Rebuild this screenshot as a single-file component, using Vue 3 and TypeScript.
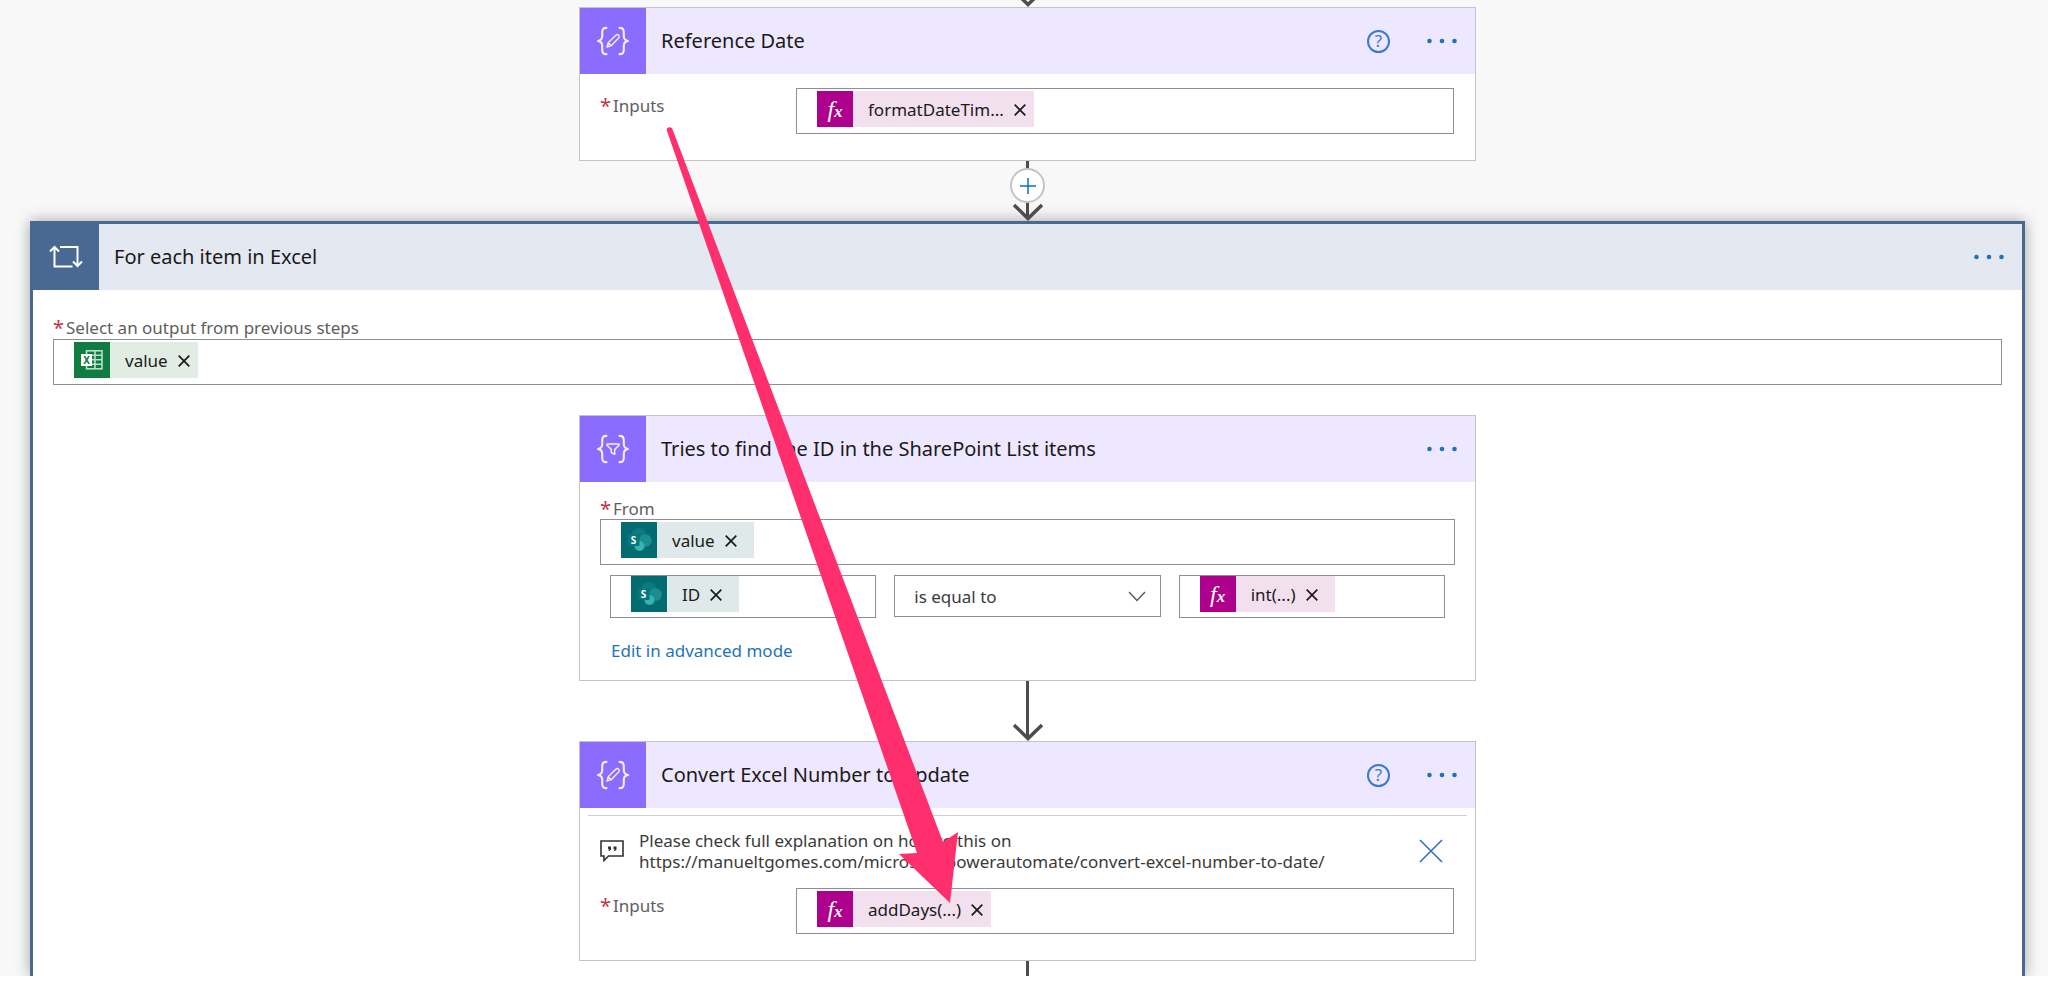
<script setup lang="ts">
import { ref } from 'vue'

type Source = 'fx' | 'excel' | 'sharepoint'

interface Token {
  source: Source
  text: string
}

const referenceInputs = ref<Token[]>([{ source: 'fx', text: 'formatDateTim...' }])
const loopSource = ref<Token[]>([{ source: 'excel', text: 'value' }])
const filterFrom = ref<Token[]>([{ source: 'sharepoint', text: 'value' }])
const filterLeft = ref<Token[]>([{ source: 'sharepoint', text: 'ID' }])
const filterRight = ref<Token[]>([{ source: 'fx', text: 'int(...)' }])
const convertInputs = ref<Token[]>([{ source: 'fx', text: 'addDays(...)' }])
const operator = ref('is equal to')
const commentOpen = ref(true)

function removeToken(list: Token[], index: number) {
  list.splice(index, 1)
}
</script>

<template>
  <svg class="defs" aria-hidden="true">
    <symbol id="braces" viewBox="0 0 36 32">
      <g fill="none" stroke="currentColor" stroke-width="2.200" stroke-linecap="round" stroke-linejoin="round">
        <path d="M11 2C7.500 2 6.500 3.500 6.500 6.500v4.500c0 3-1.500 4.500-4.500 5 3 .5 4.500 2 4.500 5v4.500c0 3 1 4.500 4.500 4.500" />
        <path d="M25 2c3.500 0 4.500 1.500 4.500 4.500v4.500c0 3 1.500 4.500 4.500 5-3 .5-4.500 2-4.500 5v4.500c0 3-1 4.500-4.500 4.500" />
      </g>
    </symbol>
    <symbol id="pencil" viewBox="0 0 16 16">
      <path d="M2 14l1.200-4.200L10.800 2.200a1.800 1.800 0 0 1 2.800 2.800L6.200 12.700zM3.200 9.800l3 2.900" fill="none" stroke="currentColor" stroke-width="1.400" stroke-linejoin="round" />
    </symbol>
    <symbol id="funnel" viewBox="0 0 16 16">
      <path d="M2 3h12v1.200L9.700 8.500v4.800l-3.400-1.800V8.500L2 4.200z" fill="none" stroke="currentColor" stroke-width="1.500" stroke-linejoin="round" />
    </symbol>
    <symbol id="cross" viewBox="0 0 12 12">
      <path d="M.7.7l10.600 10.600M11.300.7L.7 11.300" fill="none" stroke="currentColor" stroke-width="1.700" />
    </symbol>
    <symbol id="dots" viewBox="0 0 30 6">
      <g fill="currentColor">
        <circle cx="2.500" cy="3" r="2.300" />
        <circle cx="15" cy="3" r="2.300" />
        <circle cx="27.500" cy="3" r="2.300" />
      </g>
    </symbol>
    <symbol id="arrow-head" viewBox="0 0 32 18">
      <path d="M2 2l14 13.500L30 2" fill="none" stroke="currentColor" stroke-width="3.500" />
    </symbol>
    <symbol id="token-fx" viewBox="0 0 36 36">
      <rect width="36" height="36" fill="#ad008c" />
    </symbol>
    <symbol id="token-excel" viewBox="0 0 36 36">
      <rect width="36" height="36" fill="#107c41" />
      <rect x="12.500" y="8.800" width="15.500" height="18" fill="none" stroke="#b9e0c8" stroke-width="1.600" />
      <path d="M12 13.300h16M12 17.800h16M12 22.300h16M21 9v18" stroke="#b9e0c8" stroke-width="1.600" />
      <rect x="7" y="12" width="11" height="12" fill="#fff" />
    </symbol>
    <symbol id="token-sharepoint" viewBox="0 0 36 36">
      <rect width="36" height="36" fill="#036c70" />
      <circle cx="18" cy="13.500" r="7.500" fill="#0d7a7d" />
      <circle cx="24.500" cy="18.500" r="6.300" fill="#1b8c90" />
      <circle cx="18.500" cy="24" r="5" fill="#37b3b6" />
      <rect x="6.500" y="12" width="12" height="12" rx="1" fill="#04787c" />
    </symbol>
  </svg>

  <main class="canvas">
    <div class="flow">
      <div class="stub"><svg class="head-icon"><use href="#arrow-head" /></svg></div>

      <section class="card">
        <header class="card-header">
          <span class="badge">
            <svg class="braces"><use href="#braces" /></svg>
            <svg class="glyph"><use href="#pencil" /></svg>
          </span>
          <h2 class="title">Reference Date</h2>
          <button class="help" type="button" aria-label="Help">?</button>
          <button class="menu" type="button" aria-label="More options"><svg><use href="#dots" /></svg></button>
        </header>
        <div class="param">
          <label class="label inline" for="reference-inputs"><span class="star">*</span>Inputs</label>
          <div class="field">
            <span v-for="(token, i) in referenceInputs" :key="i" class="token" :class="token.source">
              <span class="token-icon" aria-hidden="true">
                <svg><use :href="'#token-' + token.source" /></svg>
                <i v-if="token.source === 'fx'" class="fx-mark">f<b>x</b></i>
                <b v-else class="mark">{{ token.source === 'excel' ? 'X' : 'S' }}</b>
              </span>
              <span class="token-text">{{ token.text }}</span>
              <button type="button" aria-label="Remove" @click="removeToken(referenceInputs, i)"><svg><use href="#cross" /></svg></button>
            </span>
            <input id="reference-inputs" type="text" />
          </div>
        </div>
      </section>

      <div class="connector">
        <button class="insert" type="button" aria-label="Insert a new step">
          <svg viewBox="0 0 16 16"><path d="M8 0v16M0 8h16" stroke="currentColor" stroke-width="1.500" /></svg>
        </button>
        <svg class="head-icon"><use href="#arrow-head" /></svg>
      </div>

      <section class="scope">
        <header class="card-header scope-header">
          <span class="badge">
            <svg class="loop" viewBox="0 0 34 24">
              <path d="M5.500 3v18.500h18M11 2h17.500v18" fill="none" stroke="currentColor" stroke-width="2" />
              <path d="M1 6.500L5.500 2 10 6.500M24 16.500l4.500 4.500 4.500-4.500" fill="none" stroke="currentColor" stroke-width="2" />
            </svg>
          </span>
          <h2 class="title">For each item in Excel</h2>
          <button class="menu" type="button" aria-label="More options"><svg><use href="#dots" /></svg></button>
        </header>
        <div class="scope-param">
          <label class="label" for="loop-source"><span class="star">*</span>Select an output from previous steps</label>
          <div class="field">
            <span v-for="(token, i) in loopSource" :key="i" class="token" :class="token.source">
              <span class="token-icon" aria-hidden="true">
                <svg><use :href="'#token-' + token.source" /></svg>
                <i v-if="token.source === 'fx'" class="fx-mark">f<b>x</b></i>
                <b v-else class="mark">{{ token.source === 'excel' ? 'X' : 'S' }}</b>
              </span>
              <span class="token-text">{{ token.text }}</span>
              <button type="button" aria-label="Remove" @click="removeToken(loopSource, i)"><svg><use href="#cross" /></svg></button>
            </span>
            <input id="loop-source" type="text" />
          </div>
        </div>

        <section class="card">
          <header class="card-header">
            <span class="badge">
              <svg class="braces"><use href="#braces" /></svg>
              <svg class="glyph"><use href="#funnel" /></svg>
            </span>
            <h2 class="title">Tries to find the ID in the SharePoint List items</h2>
            <button class="menu" type="button" aria-label="More options"><svg><use href="#dots" /></svg></button>
          </header>
          <div class="filter">
            <label class="label" for="filter-from"><span class="star">*</span>From</label>
            <div class="field">
              <span v-for="(token, i) in filterFrom" :key="i" class="token roomy" :class="token.source">
                <span class="token-icon" aria-hidden="true">
                  <svg><use :href="'#token-' + token.source" /></svg>
                  <i v-if="token.source === 'fx'" class="fx-mark">f<b>x</b></i>
                  <b v-else class="mark">{{ token.source === 'excel' ? 'X' : 'S' }}</b>
                </span>
                <span class="token-text">{{ token.text }}</span>
                <button type="button" aria-label="Remove" @click="removeToken(filterFrom, i)"><svg><use href="#cross" /></svg></button>
              </span>
              <input id="filter-from" type="text" />
            </div>
            <div class="condition">
              <div class="field compact">
                <span v-for="(token, i) in filterLeft" :key="i" class="token roomy" :class="token.source">
                  <span class="token-icon" aria-hidden="true">
                    <svg><use :href="'#token-' + token.source" /></svg>
                    <i v-if="token.source === 'fx'" class="fx-mark">f<b>x</b></i>
                    <b v-else class="mark">{{ token.source === 'excel' ? 'X' : 'S' }}</b>
                  </span>
                  <span class="token-text">{{ token.text }}</span>
                  <button type="button" aria-label="Remove" @click="removeToken(filterLeft, i)"><svg><use href="#cross" /></svg></button>
                </span>
                <input type="text" aria-label="Value to compare" />
              </div>
              <div class="operator">
                <select v-model="operator" aria-label="Operator">
                  <option>is equal to</option>
                  <option>is not equal to</option>
                </select>
                <svg viewBox="0 0 18 11"><path d="M1 1l8 8.500L17 1" fill="none" stroke="#555" stroke-width="1.300" /></svg>
              </div>
              <div class="field compact">
                <span v-for="(token, i) in filterRight" :key="i" class="token roomy" :class="token.source">
                  <span class="token-icon" aria-hidden="true">
                    <svg><use :href="'#token-' + token.source" /></svg>
                    <i v-if="token.source === 'fx'" class="fx-mark">f<b>x</b></i>
                    <b v-else class="mark">{{ token.source === 'excel' ? 'X' : 'S' }}</b>
                  </span>
                  <span class="token-text">{{ token.text }}</span>
                  <button type="button" aria-label="Remove" @click="removeToken(filterRight, i)"><svg><use href="#cross" /></svg></button>
                </span>
                <input type="text" aria-label="Compared value" />
              </div>
            </div>
            <a class="advanced" href="#">Edit in advanced mode</a>
          </div>
        </section>

        <div class="connector"><svg class="head-icon"><use href="#arrow-head" /></svg></div>

        <section class="card">
          <header class="card-header">
            <span class="badge">
              <svg class="braces"><use href="#braces" /></svg>
              <svg class="glyph"><use href="#pencil" /></svg>
            </span>
            <h2 class="title">Convert Excel Number to Update</h2>
            <button class="help" type="button" aria-label="Help">?</button>
            <button class="menu" type="button" aria-label="More options"><svg><use href="#dots" /></svg></button>
          </header>
          <div v-if="commentOpen" class="comment">
            <svg class="bubble" viewBox="0 0 24 22">
              <path d="M1 1h22v15H8.500L4 20.500V16H1z" fill="none" stroke="#333" stroke-width="1.600" />
              <path d="M8 6.500h3v3L9.500 11H8.500l.7-1.800H8zM13.500 6.500h3v3L15 11h-1l.7-1.800h-1.200z" fill="#333" />
            </svg>
            <p>Please check full explanation on how to this on<br />https://manueltgomes.com/microsoft/powerautomate/convert-excel-number-to-date/</p>
            <button type="button" class="dismiss" aria-label="Delete comment" @click="commentOpen = false">
              <svg viewBox="0 0 24 24"><path d="M1 1l22 22M23 1L1 23" stroke="currentColor" stroke-width="1.600" /></svg>
            </button>
          </div>
          <div class="param">
            <label class="label inline" for="convert-inputs"><span class="star">*</span>Inputs</label>
            <div class="field">
              <span v-for="(token, i) in convertInputs" :key="i" class="token" :class="token.source">
                <span class="token-icon" aria-hidden="true">
                  <svg><use :href="'#token-' + token.source" /></svg>
                  <i v-if="token.source === 'fx'" class="fx-mark">f<b>x</b></i>
                  <b v-else class="mark">{{ token.source === 'excel' ? 'X' : 'S' }}</b>
                </span>
                <span class="token-text">{{ token.text }}</span>
                <button type="button" aria-label="Remove" @click="removeToken(convertInputs, i)"><svg><use href="#cross" /></svg></button>
              </span>
              <input id="convert-inputs" type="text" />
            </div>
          </div>
        </section>
        <div class="tail"></div>
      </section>

      <svg class="pointer" viewBox="0 0 304 790" aria-hidden="true">
        <path d="M6.500 9.500Q8 6 12 8L283 722l15-10-8 71-51-49 18-1z" fill="#ff2f6d" />
      </svg>
    </div>
  </main>
</template>

<style>
body {
  background: #fff;
}
</style>

<style scoped>
.defs {
  position: absolute;
  width: 0;
  height: 0;
}
.canvas {
  overflow: hidden;
  padding: 0 23px 0 30px;
  background: #f8f8f8;
  font-family: "Noto Sans", sans-serif;
  font-size: 17px;
  line-height: 20px;
  color: #1b1a19;
}
.canvas *,
.canvas {
  box-sizing: border-box;
}
.flow {
  position: relative;
}
button {
  display: flex;
  align-items: center;
  justify-content: center;
  padding: 0;
  border: 0;
  background: none;
  font: inherit;
  cursor: pointer;
}
.stub {
  display: flex;
  flex-direction: column;
  align-items: center;
  justify-content: flex-end;
  height: 7px;
  color: #4d4d4d;
}
.head-icon {
  flex: none;
  width: 32px;
  height: 18px;
}
.card {
  width: 100%;
  max-width: 897px;
  margin: 0 auto;
  border: 1px solid #c4c4c8;
  background: #fff;
}
.card-header {
  display: flex;
  align-items: center;
  height: 66px;
  padding-right: 18px;
  background: #ede7ff;
}
.badge {
  display: grid;
  place-items: center;
  flex: none;
  width: 66px;
  height: 66px;
  background: #8c6cff;
  color: #f4f0ff;
}
.badge > svg {
  grid-area: 1 / 1;
}
.braces {
  width: 36px;
  height: 30px;
}
.glyph {
  width: 16px;
  height: 16px;
}
.loop {
  width: 34px;
  height: 24px;
}
.title {
  flex: 1;
  margin: 0;
  padding-left: 15px;
  font-size: 20px;
  font-weight: 400;
  line-height: 28px;
}
.help {
  width: 23px;
  height: 23px;
  margin-right: 37px;
  border: 2px solid #3a78d4;
  border-radius: 50%;
  color: #3a78d4;
  line-height: 18px;
}
.menu {
  width: 30px;
  height: 30px;
  color: #1f74b8;
}
.menu svg {
  width: 30px;
  height: 6px;
}
.scope {
  border: 3px solid #486991;
  border-bottom: 0;
  background: #fff;
  box-shadow: 0 0 14px rgba(0, 0, 0, 0.35);
}
.scope-header {
  background: #e4e8f0;
}
.scope-header .badge {
  background: #486991;
  color: #fff;
}
.scope-param {
  padding: 28px 20px 30px;
}
.scope-param .label {
  margin-bottom: 1px;
}
.label {
  display: flex;
  color: #605e5c;
}
.label.inline {
  width: 196px;
  line-height: 36px;
}
.star {
  width: 13px;
  color: #c4314b;
  font-size: 20px;
}
.param {
  display: flex;
  align-items: flex-start;
  padding: 14px 21px 26px 20px;
}
.field {
  display: flex;
  flex: 1;
  min-width: 0;
  height: 46px;
  padding: 2px 0 0 20px;
  border: 1px solid #8f8f8f;
  background: #fff;
}
.field.compact {
  height: 43px;
  padding-top: 0;
}
.field input {
  flex: 1;
  min-width: 0;
  padding: 0;
  border: 0;
  outline: 0;
  background: none;
  font: inherit;
}
.token {
  display: flex;
  align-items: center;
  flex: none;
  height: 36px;
  padding-right: 8px;
}
.token.roomy {
  padding-right: 17px;
}
.token.fx {
  background: #f2e0ef;
}
.token.excel {
  background: #e1ece4;
}
.token.sharepoint {
  background: #dfe9ea;
}
.token-icon {
  display: grid;
  width: 36px;
  height: 36px;
  margin-right: 15px;
}
.token-icon > * {
  grid-area: 1 / 1;
}
.token-icon svg {
  width: 36px;
  height: 36px;
}
.fx-mark {
  align-self: center;
  justify-self: center;
  font-family: "Liberation Serif", serif;
  font-size: 24px;
  line-height: 36px;
  color: #fff;
}
.fx-mark b {
  font-size: 17px;
}
.mark {
  width: 25px;
  font-size: 10px;
  line-height: 36px;
  text-align: center;
  color: #fff;
}
.excel .mark {
  color: #107c41;
}
.token-text {
  padding-top: 2px;
}
.token button {
  width: 12px;
  height: 14px;
  margin-left: 10px;
  padding-top: 2px;
  color: #1b1a19;
}
.token button svg {
  width: 12px;
  height: 12px;
}
.connector {
  display: flex;
  flex-direction: column;
  align-items: center;
  justify-content: flex-end;
  height: 60px;
  background: linear-gradient(#4d4d4d, #4d4d4d) center top / 3px 57px no-repeat;
  color: #4d4d4d;
}
.insert {
  flex: none;
  width: 35px;
  height: 35px;
  border: 2px solid #c4c4c4;
  border-radius: 50%;
  background: #fff;
  color: #0f6cbd;
}
.insert svg {
  width: 16px;
  height: 16px;
}
.filter {
  padding: 17px 20px 19px;
}
.condition {
  display: grid;
  grid-template-columns: repeat(3, minmax(0, 1fr));
  align-items: start;
  gap: 18px;
  padding: 10px 10px 23px;
}
.operator {
  display: flex;
  align-items: center;
  height: 42px;
  border: 1px solid #8f8f8f;
}
.operator select {
  flex: 1;
  min-width: 0;
  height: 40px;
  margin-right: -32px;
  padding: 2px 32px 0 19px;
  border: 0;
  outline: 0;
  appearance: none;
  background: none;
  font: inherit;
  color: #3b3a39;
}
.operator svg {
  width: 18px;
  height: 11px;
  margin-right: 14px;
  pointer-events: none;
}
.advanced {
  display: block;
  margin-left: 11px;
  color: #1f74b8;
  text-decoration: none;
}
.comment {
  display: flex;
  align-items: center;
  margin: 7px 8px 0;
  padding: 14px 24px 2px 12px;
  border-top: 1px solid #d2d0ce;
}
.comment p {
  flex: 1;
  margin: 0;
  line-height: 21px;
  color: #3b3a39;
}
.bubble {
  width: 24px;
  height: 22px;
  margin-right: 15px;
}
.dismiss {
  width: 24px;
  height: 24px;
  color: #2f6fd0;
}
.dismiss svg {
  width: 24px;
  height: 24px;
}
.tail {
  width: 3px;
  height: 15px;
  margin: 0 auto;
  background: #4d4d4d;
}
.pointer {
  position: absolute;
  top: 120px;
  left: calc(50% - 368px);
  width: 304px;
  height: 790px;
  pointer-events: none;
}
</style>
